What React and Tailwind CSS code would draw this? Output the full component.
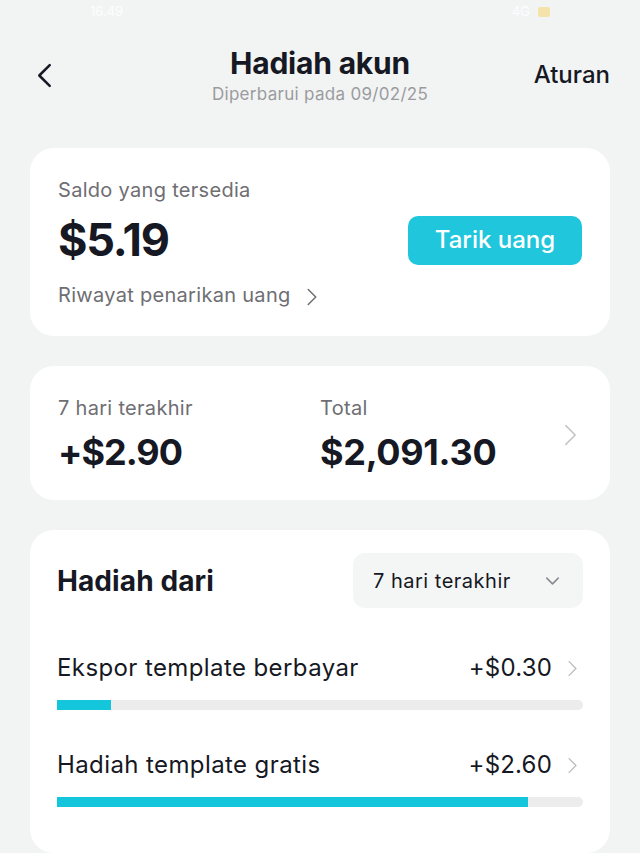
const sources = [
  { name: 'Ekspor template berbayar', amount: '+$0.30', pct: 10.3 },
  { name: 'Hadiah template gratis', amount: '+$2.60', pct: 89.5 },
];

// thin chevron matching the app's proportions (taller than wide)
function Chev({ className, dir = 'right', sw = 2 }) {
  const d = dir === 'left' ? 'M13 2 L3 12 L13 22' : dir === 'down' ? 'M2 3 L10 11 L18 3' : 'M3 2 L13 12 L3 22';
  const vb = dir === 'down' ? '0 0 20 14' : '0 0 16 24';
  return (
    <svg viewBox={vb} className={className} fill="none" stroke="currentColor" strokeWidth={sw} strokeLinecap="round" strokeLinejoin="round">
      <path d={d} />
    </svg>
  );
}

export default function App() {
  return (
    <div className="min-h-screen bg-[#f2f4f4] font-[Inter,'Noto_Sans',sans-serif] text-[#161823] pb-6">
      {/* status bar (white on light bg, barely visible) */}
      <div className="h-[30px] flex items-start justify-between px-[90px] pt-[2px] text-[13px] text-white/80">
        <span>16.49</span>
        <span className="flex items-center gap-2">
          <span>4G</span>
          <span className="w-[12px] h-[10px] bg-[#f3dc8a]/70 rounded-[2px]" />
        </span>
      </div>

      {/* Header */}
      <div className="grid grid-cols-[1fr_auto_1fr] items-start px-[30px] pt-[15px] h-[118px]">
        <div className="pt-[18px] pl-[6px]">
          <Chev dir="left" className="w-[17px] h-[25px] text-[#161823]" sw={2.4} />
        </div>
        <div className="flex flex-col items-center">
          <h1 className="text-[30px] font-bold leading-[36px] tracking-[-0.2px]">Hadiah akun</h1>
          <p className="mt-[3px] text-[17px] leading-[21px] text-[#9b9b9f] tracking-[0.3px]">Diperbarui pada 09/02/25</p>
        </div>
        <div className="flex justify-end pt-[15px]">
          <span className="text-[24px] font-medium leading-[30px]">Aturan</span>
        </div>
      </div>

      {/* Balance card */}
      <div className="mx-[30px] rounded-[24px] bg-white px-[28px] pt-[30px] pb-[29px]">
        <p className="text-[20px] leading-[24px] text-[#6e6e73] tracking-[0.3px]">Saldo yang tersedia</p>
        <div className="flex items-center justify-between mt-[12px]">
          <span className="text-[45px] font-bold leading-[52px] tracking-[-1.2px]">$5.19</span>
          <button className="w-[174px] h-[49px] rounded-[10px] bg-[#1fc6dc] text-white text-[24px] font-medium">Tarik uang</button>
        </div>
        <div className="flex items-center gap-[15px] mt-[17px]">
          <span className="text-[20px] leading-[24px] text-[#6e6e73] tracking-[0.3px]">Riwayat penarikan uang</span>
          <Chev className="w-[12px] h-[18px] text-[#6e6e73] mt-[3px]" sw={2} />
        </div>
      </div>

      {/* Earnings summary card */}
      <div className="mx-[30px] mt-[30px] rounded-[24px] bg-white pl-[28px] pr-[32px] pt-[30px] pb-[26px] flex items-center">
        <div className="w-[262px]">
          <p className="text-[20px] leading-[24px] text-[#6e6e73] tracking-[0.3px]">7 hari terakhir</p>
          <p className="text-[36px] font-bold leading-[44px] mt-[10px] tracking-[-1px]">+$2.90</p>
        </div>
        <div className="flex-1">
          <p className="text-[20px] leading-[24px] text-[#6e6e73] tracking-[0.3px]">Total</p>
          <p className="text-[36px] font-bold leading-[44px] mt-[10px] tracking-[-0.3px]">$2,091.30</p>
        </div>
        <Chev className="w-[15px] h-[24px] text-[#c4c4c7]" sw={1.6} />
      </div>

      {/* Rewards source card */}
      <div className="mx-[30px] mt-[30px] rounded-[24px] bg-white px-[27px] pt-[23px] pb-[46px]">
        <div className="flex items-center justify-between">
          <h2 className="text-[28px] font-bold leading-[32px] tracking-[0.1px]">Hadiah dari</h2>
          <div className="w-[230px] h-[55px] rounded-[12px] bg-[#f4f6f6] flex items-center justify-between pl-[20px] pr-[23px]">
            <span className="text-[20px] leading-[24px] tracking-[0.5px]">7 hari terakhir</span>
            <Chev dir="down" className="w-[15px] h-[10px] text-[#8a8b91]" sw={2.2} />
          </div>
        </div>

        <div className="flex flex-col gap-[41px] mt-[46px]">
          {sources.map((s) => (
            <div key={s.name}>
              <div className="flex items-center justify-between">
                <span className="text-[24px] leading-[28px] tracking-[0.4px]">{s.name}</span>
                <span className="flex items-center gap-[15px]">
                  <span className="text-[24px] leading-[28px] tracking-[0.2px]">{s.amount}</span>
                  <Chev className="w-[11px] h-[17px] text-[#bdbdc0] mr-[5px]" sw={2} />
                </span>
              </div>
              <div className="mt-[18px] h-[10px] rounded-r-full bg-[#ececec] overflow-hidden">
                <div className="h-full bg-[#14c6dc]" style={{ width: `${s.pct}%` }} />
              </div>
            </div>
          ))}
        </div>
      </div>
    </div>
  );
}
